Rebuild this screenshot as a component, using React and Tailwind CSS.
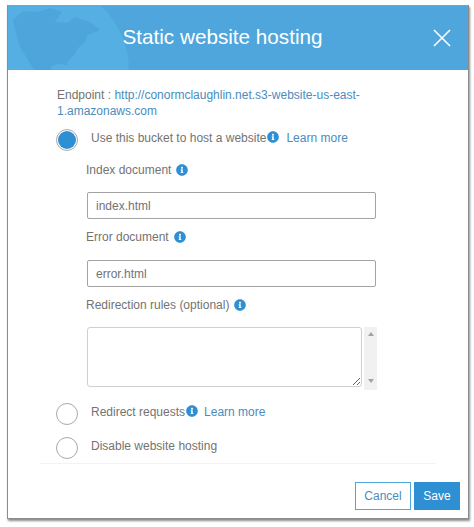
import React from 'react';
import { FaInfoCircle } from 'react-icons/fa';

function Info({ className = '' }) {
    return <FaInfoCircle className={`text-[12px] text-[#2f8fd3] shrink-0 ${className}`} />;
}

function Radio({ checked }) {
    return (
        <span className="w-[22px] h-[22px] -ml-[1px] rounded-full border border-[#a9a9a9] bg-white flex items-center justify-center shrink-0">
            {checked && <span className="w-[18px] h-[18px] rounded-full bg-[#2f8fd3]" />}
        </span>
    );
}

function Globe() {
    return (
        <svg className="absolute left-0 top-0" width="135" height="64" viewBox="0 0 135 64">
            <circle cx="34" cy="64" r="87" fill="#55afe2" />
            <path
                d="M5 14 L15 5 L30 6 L42 2 L54 6 L47 16 L59 17 L67 11 L72 13 L82 16 L92 24 L80 29 L76 37 L70 42 L66 49 L60 55 L58 64 L26 64 L20 54 L12 41 L8 28 Z"
                fill="#4da5dc"
            />
            <ellipse cx="52" cy="62" rx="9" ry="4" fill="#55afe2" />
        </svg>
    );
}

export default function App() {
    return (
        <div className="w-[474px] h-[527px] bg-white pl-[7px] pt-[5px] font-['Liberation_Sans',Arial,sans-serif]">
            <div className="w-[462px] h-[514px] bg-white border border-[#8c8c8c] border-t-[#9a9a9a] shadow-[1px_2px_2px_rgba(0,0,0,0.45)] flex flex-col">
                <div className="relative h-[64px] bg-[#4fa6dc] overflow-hidden flex items-center justify-center shrink-0">
                    <Globe />
                    <h1 className="relative text-[20.7px] text-white pr-[31px] pb-[2px]">Static website hosting</h1>
                    <svg className="absolute right-[17px] top-[23px]" width="18" height="18" viewBox="0 0 18 18">
                        <path d="M1 1 L17 17 M17 1 L1 17" stroke="white" strokeWidth="1.6" fill="none" />
                    </svg>
                </div>

                <div className="pl-[49px] pt-[17px] text-[12px] text-[#737373]">
                    <p className="leading-[16px] w-[310px]">
                        Endpoint : <span className="text-[#4a8cbd]">http://conormclaughlin.net.s3-website-us-east-1.amazonaws.com</span>
                    </p>

                    <div className="flex items-center mt-[10px] h-[22px]">
                        <Radio checked />
                        <span className="ml-[13px] -mt-[4px]">Use this bucket to host a website</span>
                        <Info className="ml-[1px] -mt-[6px]" />
                        <span className="ml-[7px] -mt-[4px] text-[#4a8cbd]">Learn more</span>
                    </div>

                    <div className="pl-[30px]">
                        <div className="flex items-center mt-[11px] h-[16px] -ml-[1px]">
                            <span>Index document</span>
                            <Info className="ml-[5px]" />
                        </div>
                        <input
                            readOnly
                            value="index.html"
                            className="block w-[289px] h-[27px] mt-[14px] px-[8px] border border-[#a3a3a3] rounded-[2px] text-[#737373] outline-none"
                        />
                        <div className="flex items-center mt-[10px] h-[16px] -ml-[1px]">
                            <span>Error document</span>
                            <Info className="ml-[5px]" />
                        </div>
                        <input
                            readOnly
                            value="error.html"
                            className="block w-[289px] h-[27px] mt-[15px] px-[8px] border border-[#a3a3a3] rounded-[2px] text-[#737373] outline-none"
                        />
                        <div className="flex items-center mt-[10px] h-[16px] -ml-[1px]">
                            <span>Redirection rules (optional)</span>
                            <Info className="ml-[5px]" />
                        </div>
                        <div className="flex items-start mt-[14px]">
                            <textarea className="block w-[275px] h-[60px] border border-[#cfcfcf] rounded-[3px] outline-none resize-y" />
                            <div className="w-[13px] h-[63px] ml-[2px] bg-[#f1f1f1] flex flex-col justify-between items-center py-[5px]">
                                <span className="w-0 h-0 border-x-[3px] border-x-transparent border-b-[4px] border-b-[#a3a3a3]" />
                                <span className="w-0 h-0 border-x-[3px] border-x-transparent border-t-[4px] border-t-[#a3a3a3] mb-[2px]" />
                            </div>
                        </div>
                    </div>

                    <div className="flex items-center mt-[13px] h-[22px]">
                        <Radio />
                        <span className="ml-[13px] -mt-[4px]">Redirect requests</span>
                        <Info className="ml-[1px] -mt-[6px]" />
                        <span className="ml-[6px] -mt-[4px] text-[#4a8cbd]">Learn more</span>
                    </div>
                    <div className="flex items-center mt-[12px] h-[22px]">
                        <Radio />
                        <span className="ml-[13px] -mt-[4px]">Disable website hosting</span>
                    </div>
                </div>

                <div className="h-px bg-[#f3f3f3] mt-[4px] ml-[32px] w-[396px]" />

                <div className="flex justify-end gap-[3px] mt-[18px] pr-[8px] text-[12px]">
                    <button className="w-[56px] h-[28px] border border-[#4fa6dc] text-[#4a8cbd] bg-white">Cancel</button>
                    <button className="w-[46px] h-[28px] bg-[#2f8fd3] text-white">Save</button>
                </div>
            </div>
        </div>
    );
}
